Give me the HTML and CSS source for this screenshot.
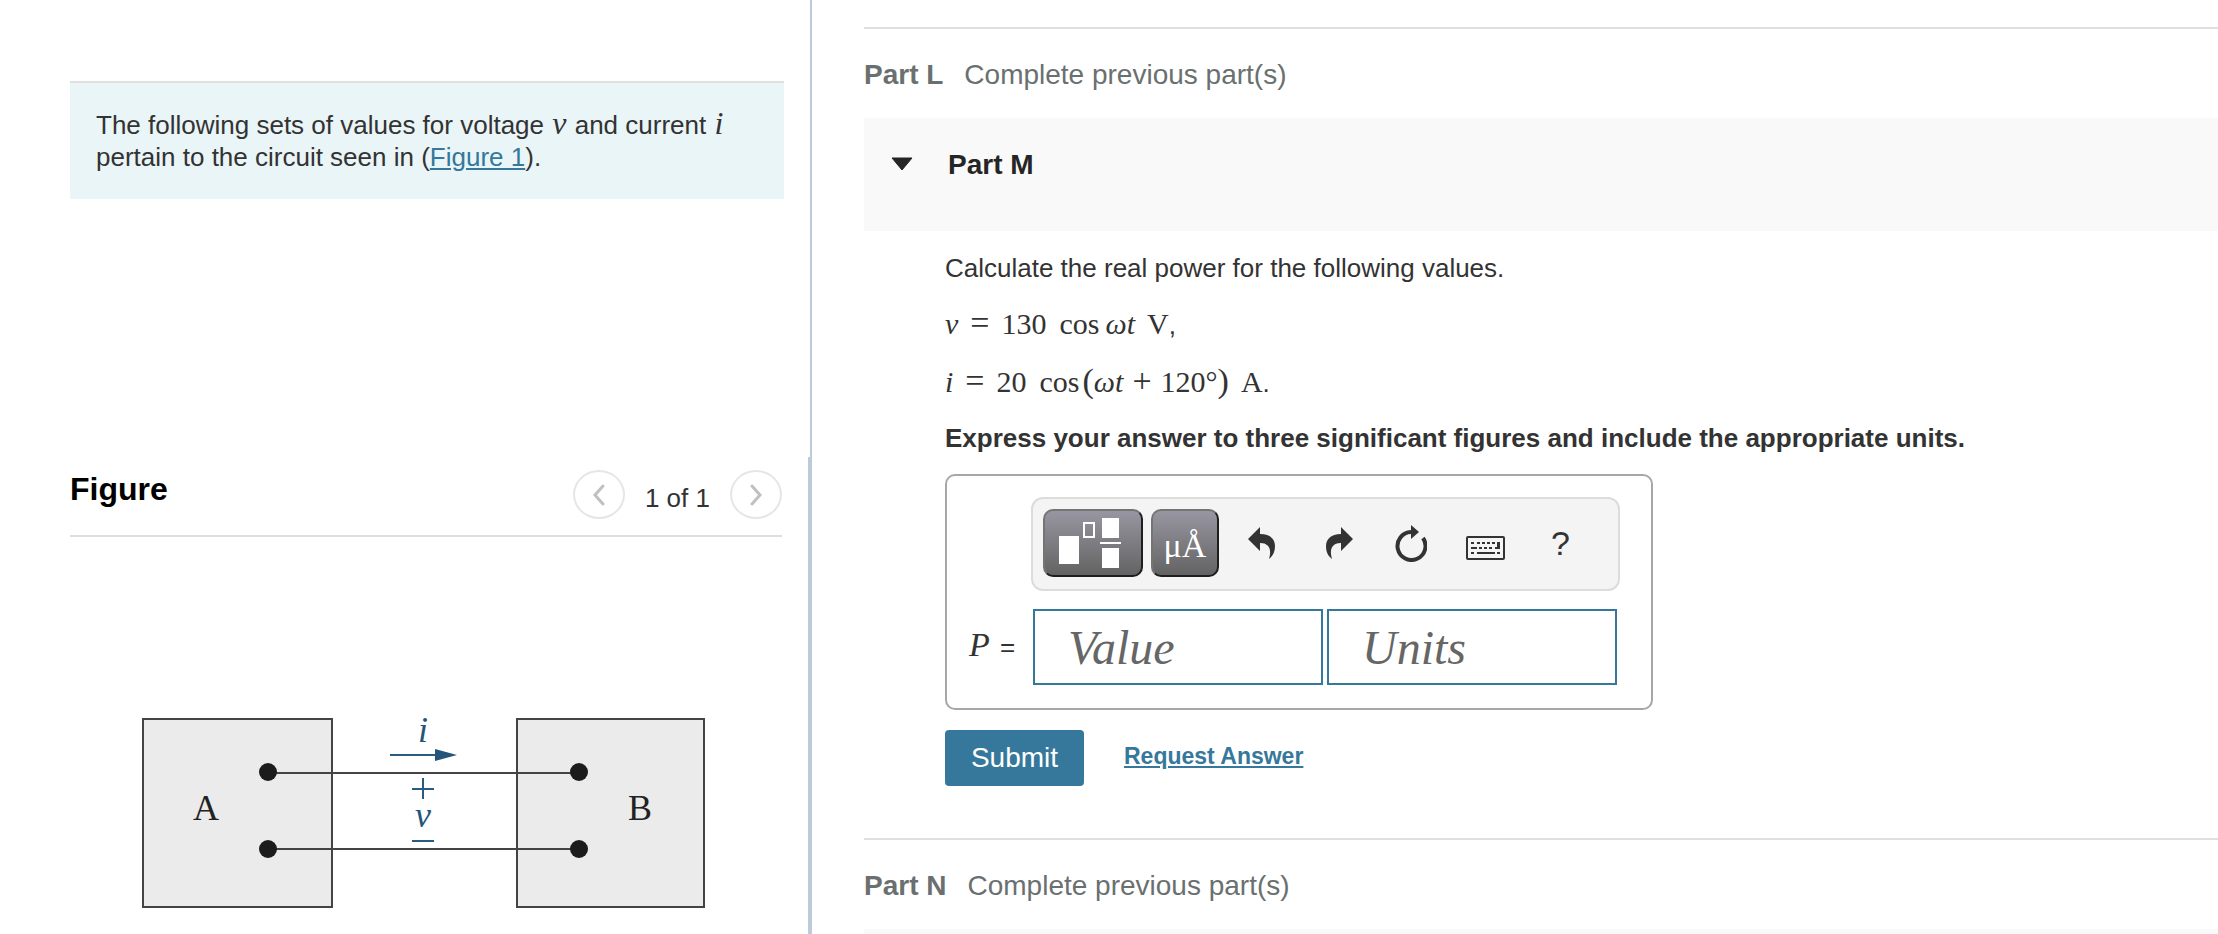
FILE: index.html
```html
<!DOCTYPE html>
<html lang="en">

<head>
    <meta charset="utf-8">
    <title>Part M</title>
    <link rel="stylesheet" href="styles.css">
</head>

<body>
    <div class="page">
        <aside class="side">
            <section class="intro">
                <p class="intro-text">The following sets of values for voltage <i class="sym">v</i> and current <i class="sym">i</i> pertain to the circuit seen in (<a href="#figure">Figure 1</a>).</p>
            </section>

            <section class="figure" id="figure">
                <header class="figure-head">
                    <h2>Figure</h2>
                    <div class="pager">
                        <button type="button" class="pager-btn" aria-label="Previous figure">
                            <svg width="14" height="22" viewBox="0 0 14 22"><path d="M11 2 3 11l8 9" /></svg>
                        </button>
                        <span class="pager-text">1 of 1</span>
                        <button type="button" class="pager-btn" aria-label="Next figure">
                            <svg width="14" height="22" viewBox="0 0 14 22"><path d="m3 2 8 9-8 9" /></svg>
                        </button>
                    </div>
                </header>
                <svg class="circuit" width="564" height="206" viewBox="0 0 564 206">
                    <g class="box">
                        <rect x="2" y="15" width="189" height="188" />
                        <rect x="376" y="15" width="187" height="188" />
                    </g>
                    <path class="wire" d="M127 69H438M127 145H438" />
                    <g class="node">
                        <circle cx="127" cy="68" r="9" />
                        <circle cx="438" cy="68" r="9" />
                        <circle cx="127" cy="145" r="9" />
                        <circle cx="438" cy="145" r="9" />
                    </g>
                    <path class="mark" d="M249 51H298M271 85H293M282 74V95M271 137H293" />
                    <path class="head" d="M294 45 316 51 294 57Z" />
                    <text class="name" x="65" y="116" text-anchor="middle">A</text>
                    <text class="name" x="499" y="116" text-anchor="middle">B</text>
                    <text class="var" x="282" y="38" text-anchor="middle">i</text>
                    <text class="var" x="282" y="123" text-anchor="middle">v</text>
                </svg>
            </section>
        </aside>

        <main class="main">
            <div class="locked"><b>Part L</b><span>Complete previous part(s)</span></div>

            <header class="part-head">
                <svg width="22" height="14" viewBox="0 0 22 14"><path d="M1 1H21L11 13Z" fill="#252525" stroke="#252525" stroke-linejoin="round" /></svg>
                <h2>Part M</h2>
            </header>

            <form class="part-body">
                <p>Calculate the real power for the following values.</p>
                <p class="math"><i>v</i><span class="rel">=</span>130<span class="fn">cos</span><i>ωt</i><span class="unit">V</span><span class="punct">,</span></p>
                <p class="math"><i>i</i><span class="rel">=</span>20<span class="fn fn-open">cos</span><span class="paren">(</span><i>ωt</i><span class="op">+</span>120°<span class="paren">)</span><span class="unit">A</span><span class="punct">.</span></p>
                <p><b>Express your answer to three significant figures and include the appropriate units.</b></p>

                <div class="answer">
                    <div class="toolbar">
                        <button type="button" class="tool tool-wide" aria-label="Templates">
                            <svg width="68" height="52" viewBox="0 0 68 52">
                                <path fill="#fff" d="M0 19h20v28H0zM43 1h17v20H43zM41 25h21v2H41zM43 31h17v20H43z" />
                                <path fill="none" stroke="#fff" stroke-width="2" d="M25 6h10v14H25z" />
                            </svg>
                        </button>
                        <button type="button" class="tool tool-text" aria-label="Symbols">μÅ</button>
                        <button type="button" class="icon" aria-label="Undo">
                            <svg width="28" height="32" viewBox="0 0 28 32"><path d="M1 12 13 0V7C23 7 28 12 28 19C28 25 26 29 22 32C25 22 22 16 13 16V24Z" /></svg>
                        </button>
                        <button type="button" class="icon" aria-label="Redo">
                            <svg width="34" height="32" viewBox="0 0 34 32"><path d="M34 12 22 0V7C12 7 7 12 7 19C7 25 9 29 13 32C10 22 13 16 22 16V24Z" /></svg>
                        </button>
                        <button type="button" class="icon" aria-label="Reset">
                            <svg width="32" height="37" viewBox="0 0 32 37">
                                <path d="M28 13A14 14 0 1 1 16 7" fill="none" stroke="#333" stroke-width="4" />
                                <path d="M16 0 24 7 16 14Z" />
                            </svg>
                        </button>
                        <button type="button" class="icon" aria-label="Keyboard shortcuts">
                            <svg class="keys" width="40" height="26" viewBox="0 0 40 26">
                                <rect x="1" y="2" width="37" height="22" rx="1" fill="none" stroke="#333" stroke-width="2" />
                                <path d="M5 7h3v2H5zM11 7h3v2h-3zM16 7h3v2h-3zM21 7h3v2h-3zM26 7h3v2h-3zM31 7h3v7h-5v-2h2zM5 12h6v2H5zM13 12h3v2h-3zM18 12h3v2h-3zM23 12h3v2h-3zM5 17h3v2H5zM11 17h18v2H11zM31 17h3v2h-3z" />
                            </svg>
                        </button>
                        <button type="button" class="icon help" aria-label="Help">?</button>
                    </div>
                    <label class="answer-label" for="value"><i>P</i> =</label>
                    <div class="fields">
                        <input type="text" id="value" placeholder="Value" aria-label="Value">
                        <input type="text" id="units" placeholder="Units" aria-label="Units">
                    </div>
                </div>

                <div class="actions">
                    <button type="submit" class="submit">Submit</button>
                    <a href="#">Request Answer</a>
                </div>
            </form>

            <div class="locked"><b>Part N</b><span>Complete previous part(s)</span></div>
            <div class="next"></div>
        </main>
    </div>
</body>

</html>
```

FILE: styles.css
```css
* {
    box-sizing: border-box;
}

body {
    margin: 0;
    background-color: #fff;
    color: #333;
    font: 26px/32px "Liberation Sans", Arial, sans-serif;
}

h2,
p {
    margin: 0;
}

a {
    color: #35789b;
}

button {
    padding: 0;
    font-family: inherit;
    cursor: pointer;
}

svg {
    display: block;
}

.page {
    display: grid;
    grid-template-columns: 810fr 1408fr;
    min-height: 100vh;
}

/* left column */
.side {
    display: flex;
    flex-direction: column;
}

.intro {
    min-height: 457px;
    padding: 81px 26px 0 70px;
}

.intro-text {
    padding: 26px;
    border-top: 2px solid #dfdfdf;
    background-color: #eaf5f8;
}

.sym {
    margin: 0 1px;
    font-family: "Liberation Serif", serif;
    font-size: 32px;
    line-height: 20px;
}

.figure {
    flex: 1;
    padding: 0 26px 0 70px;
    border-right: 2px solid #bccada;
}

.figure-head {
    display: flex;
    justify-content: space-between;
    align-items: flex-start;
    padding: 13px 0 16px;
    border-bottom: 2px solid #dfdfdf;
}

.figure-head h2 {
    color: #000;
    font-size: 32px;
    line-height: 38px;
}

.pager {
    display: flex;
    align-items: flex-end;
    gap: 20px;
}

.pager-text {
    line-height: 42px;
}

.pager-btn {
    display: flex;
    align-items: center;
    justify-content: center;
    width: 52px;
    height: 49px;
    border: 2px solid #e6e6e6;
    border-radius: 50%;
    background-color: #fff;
}

.pager-btn path {
    fill: none;
    stroke: #c0c0c0;
    stroke-width: 3;
    stroke-linecap: round;
}

.circuit {
    max-width: 100%;
    margin: 167px auto 0 71px;
}

.circuit .box {
    fill: #ebebeb;
    stroke: #444;
    stroke-width: 2;
}

.circuit .wire {
    stroke: #444;
    stroke-width: 2;
}

.circuit .node {
    fill: #1c1c1c;
}

.circuit .mark {
    stroke: #2a5c7e;
    stroke-width: 2;
}

.circuit .head {
    fill: #23557a;
}

.circuit text {
    font-family: "Liberation Serif", serif;
    font-size: 36px;
}

.circuit .name {
    fill: #222;
}

.circuit .var {
    fill: #23557a;
    font-style: italic;
}

/* right column */
.main {
    display: flex;
    flex-direction: column;
    padding: 27px 0 0 52px;
    border-left: 2px solid #bccada;
}

.locked {
    display: flex;
    gap: 21px;
    padding: 30px 0 27px;
    border-top: 2px solid #dfdfdf;
    color: #6a7070;
    font-size: 28px;
}

.part-head {
    display: flex;
    gap: 35px;
    padding: 31px 27px 50px;
    background-color: #f9f9f9;
}

.part-head svg {
    margin-top: 8px;
}

.part-head h2 {
    color: #252525;
    font-size: 28px;
}

.part-body {
    padding: 21px 0 52px 81px;
}

.part-body p {
    margin-bottom: 22px;
}

.math {
    font-family: "Liberation Serif", serif;
    font-size: 30px;
    line-height: 36px;
}

.rel,
.op {
    margin: 0 12px;
    font-size: 34px;
    line-height: 20px;
}

.op {
    margin: 0 9px;
}

.fn {
    margin: 0 6px 0 13px;
}

.fn-open {
    margin-right: 3px;
}

.paren {
    font-size: 34px;
    line-height: 20px;
}

.unit {
    margin-left: 12px;
}

.punct {
    font-family: "Liberation Sans", Arial, sans-serif;
    font-size: 26px;
    line-height: 20px;
}

.answer {
    display: grid;
    grid-template-columns: 62px auto;
    gap: 18px 0;
    width: fit-content;
    margin-top: -2px;
    padding: 21px 31px 23px 22px;
    border: 2px solid #a7a7a7;
    border-radius: 10px;
}

.toolbar {
    display: flex;
    grid-column: 2;
    gap: 8px;
    padding: 10px 24px 12px 10px;
    border: 2px solid #dcdcdc;
    border-radius: 12px;
    background-color: #f4f4f4;
}

.tool {
    display: flex;
    align-items: center;
    justify-content: center;
    width: 68px;
    height: 68px;
    border: 2px solid;
    border-color: #747474 #1e1e1e #1e1e1e #747474;
    border-radius: 10px;
    background: linear-gradient(#9896a1, #636363);
    color: #fff;
    font-family: "Liberation Serif", serif;
    font-size: 34px;
}

.tool-wide {
    width: 100px;
}

.tool-text {
    padding-top: 6px;
}

.icon {
    display: flex;
    align-items: center;
    justify-content: center;
    width: 67px;
    height: 68px;
    border: 0;
    background: none;
    color: #333;
    fill: #333;
}

.keys {
    margin-top: 10px;
}

.help {
    font-size: 34px;
}

.answer-label {
    align-self: center;
    white-space: nowrap;
}

.answer-label i {
    margin-right: 3px;
    font-family: "Liberation Serif", serif;
    font-size: 34px;
    line-height: 20px;
}

.fields {
    display: flex;
    gap: 4px;
    padding: 0 3px 0 2px;
}

.fields input {
    flex: 1;
    width: 0;
    height: 76px;
    padding: 0 33px;
    border: 2px solid #35789b;
    background-color: #fff;
    font: italic 48px "Liberation Serif", serif;
}

.fields input::placeholder {
    color: #666;
    opacity: 1;
}

.actions {
    display: flex;
    align-items: center;
    gap: 40px;
    margin-top: 20px;
}

.actions a {
    padding-bottom: 4px;
    font-size: 23px;
    font-weight: bold;
    line-height: 32px;
}

.submit {
    width: 139px;
    height: 56px;
    border: 0;
    border-radius: 4px;
    background-color: #35789b;
    color: #fff;
    font-size: 28px;
}

.next {
    flex: 1;
    background-color: #f9f9f9;
}
```
